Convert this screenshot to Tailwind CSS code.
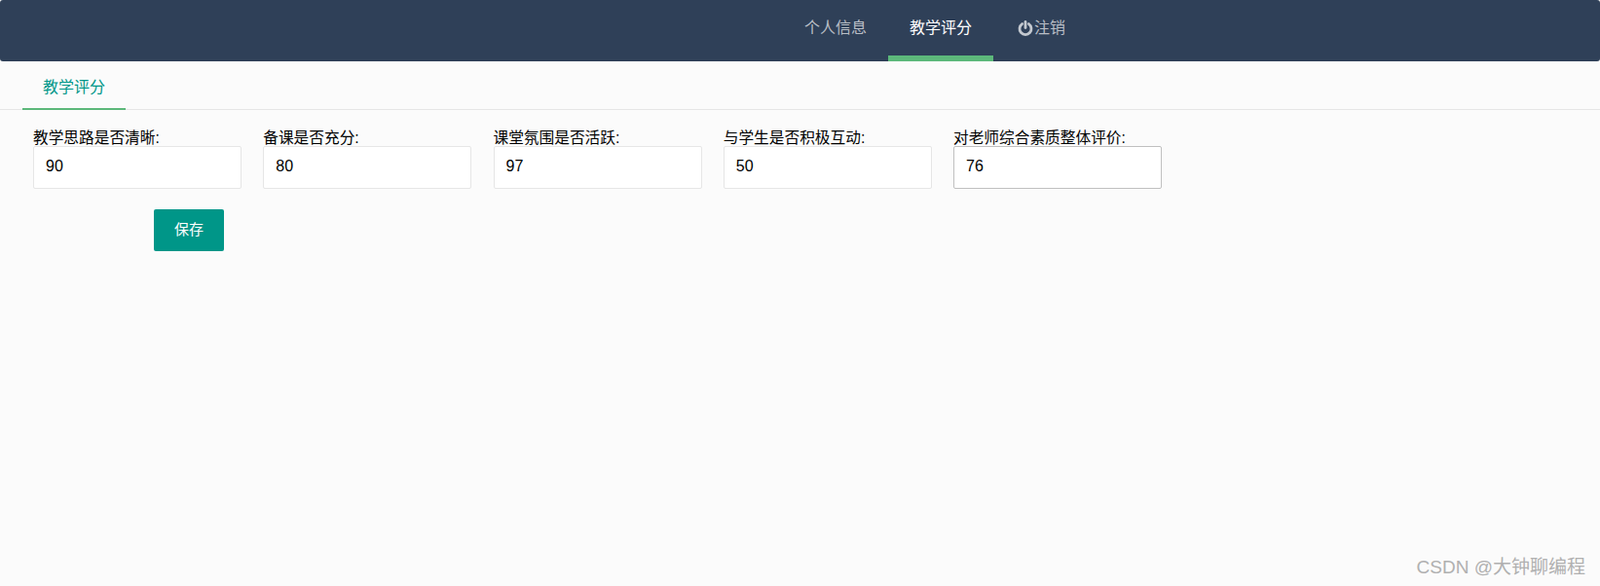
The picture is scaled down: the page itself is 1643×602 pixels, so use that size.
<!DOCTYPE html>
<html lang="zh-CN">
<head>
	<meta charset="UTF-8">
	<title>教学评分</title>
	<script src="https://cdn.jsdelivr.net/npm/@tailwindcss/browser@4"></script>
</head>
<body class="relative h-[602px] overflow-hidden bg-[#fbfbfb] text-black font-['Liberation_Sans','Noto_Sans_CJK_SC',sans-serif]">
	<!-- top nav -->
	<nav class="flex h-[63px] rounded-[3px] bg-[#2f4058] pl-[804px] text-[16px] leading-[57px] text-[#b9bec6]">
		<a class="h-[63px] px-[22px]">个人信息</a>
		<a class="h-[63px] w-[108px] border-b-[6px] border-[#5cb87a] text-center text-white">教学评分</a>
		<a class="flex h-[63px] items-center gap-[1px] self-start pb-[6px] pl-[25px]">
			<svg class="h-[16px] w-[16px]" viewBox="0 0 16 16" fill="none" stroke="#c3c8cf" stroke-width="2.8" stroke-linecap="round"><path d="M4.6 3.6a6 6 0 1 0 6.8 0"/><path d="M8 1.4v6.2"/></svg>
			<span>注销</span>
		</a>
	</nav>

	<!-- tabs -->
	<div class="h-[50px] border-b border-[#e6e6e6] pl-[23px]">
		<div class="h-[50px] w-[106px] border-b-2 border-[#5cb87a] text-center text-[16px] leading-[54px] text-[#009688]">教学评分</div>
	</div>

	<!-- score form -->
	<form class="pl-[34px] pt-[20px]">
		<div class="flex gap-[22.25px]">
			<label class="block w-[214px] text-[15.7px] leading-[17px]">教学思路是否清晰:
				<input value="90" class="block h-[44px] w-full rounded-[2px] border border-[#e6e6e6] bg-white pl-[12px] pb-[2px] text-[16px] text-black">
			</label>
			<label class="block w-[214px] text-[15.7px] leading-[17px]">备课是否充分:
				<input value="80" class="block h-[44px] w-full rounded-[2px] border border-[#e6e6e6] bg-white pl-[12px] pb-[2px] text-[16px] text-black">
			</label>
			<label class="block w-[214px] text-[15.7px] leading-[17px]">课堂氛围是否活跃:
				<input value="97" class="block h-[44px] w-full rounded-[2px] border border-[#e6e6e6] bg-white pl-[12px] pb-[2px] text-[16px] text-black">
			</label>
			<label class="block w-[214px] text-[15.7px] leading-[17px]">与学生是否积极互动:
				<input value="50" class="block h-[44px] w-full rounded-[2px] border border-[#e6e6e6] bg-white pl-[12px] pb-[2px] text-[16px] text-black">
			</label>
			<label class="block w-[214px] text-[15.7px] leading-[17px]">对老师综合素质整体评价:
				<input value="76" class="block h-[44px] w-full rounded-[2px] border border-[#c0c0c0] bg-white pl-[12px] pb-[2px] text-[16px] text-black">
			</label>
		</div>
		<button type="button" class="ml-[124px] mt-[21px] h-[43px] w-[72px] rounded-[2px] bg-[#009688] text-[15px] text-white">保存</button>
	</form>

	<div class="absolute bottom-[7px] right-[15px] text-[19px] leading-[24px] text-[#b0b0b0]">CSDN @大钟聊编程</div>
</body>
</html>
